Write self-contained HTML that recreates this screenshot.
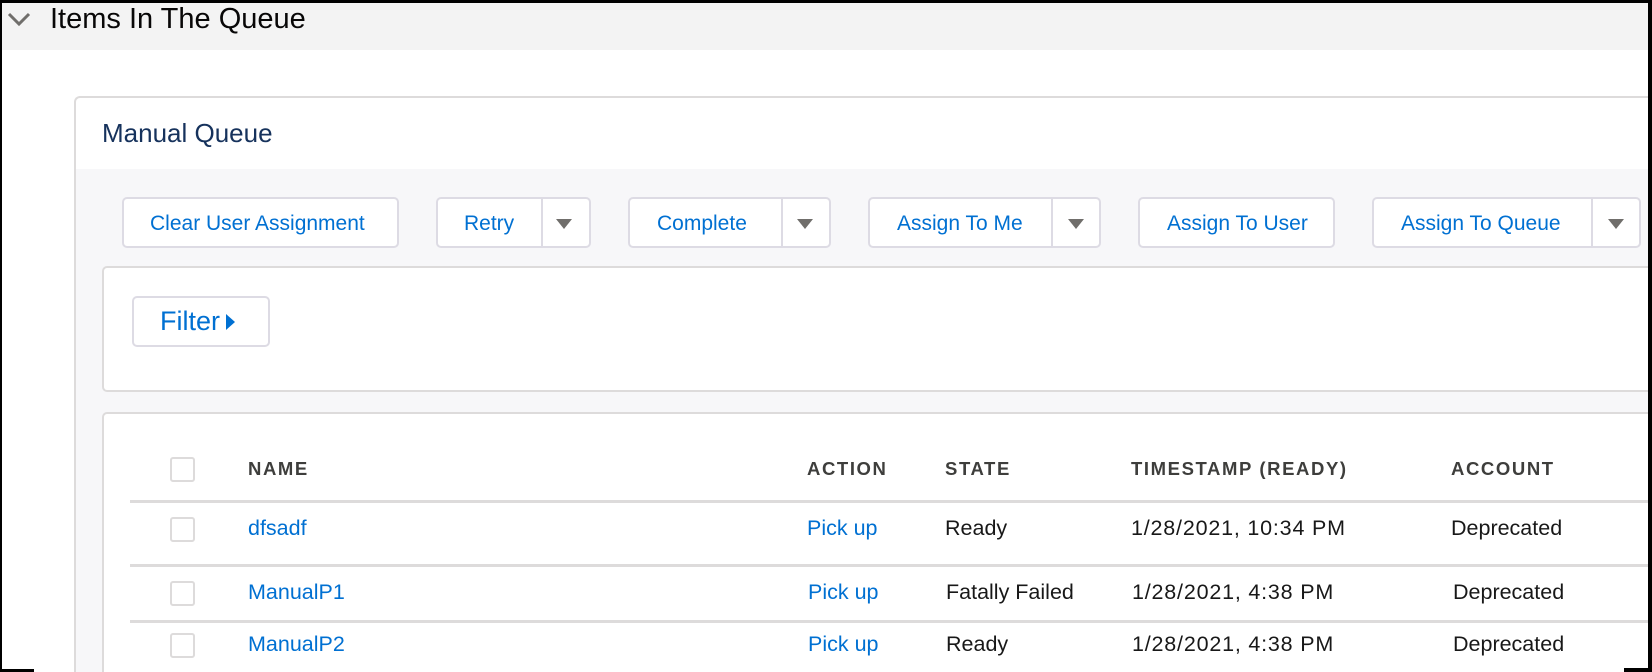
<!DOCTYPE html>
<html><head><meta charset="utf-8"><style>
*{box-sizing:border-box;margin:0;padding:0}
html,body{width:1652px;height:672px;overflow:hidden}
body{background:#fff;position:relative;font-family:"Liberation Sans",sans-serif}
.a{position:absolute}
.hdr{left:0;top:0;width:1652px;height:50px;background:#f3f3f3}
.t{position:absolute;white-space:nowrap;line-height:1}
.btn{position:absolute;top:197px;height:51px;border:2px solid #dddbe4;border-radius:5px;background:#fff;color:#0070d2;font-size:21px}
.btn span{position:absolute;top:13px;white-space:nowrap}
.sp{position:absolute;top:0;bottom:0;border-left:2px solid #dddbe4}
.tri{position:absolute;top:20px;width:0;height:0;border-left:8px solid transparent;border-right:8px solid transparent;border-top:10px solid #706e6b}
.th{font-size:18.5px;font-weight:bold;color:#3e3e3c;letter-spacing:1.6px}
.td{font-size:21.5px;color:#181818}
.ts{letter-spacing:0.8px}
.lk{font-size:21.5px;color:#0070d2}
.cb{position:absolute;left:170px;width:25px;height:25px;border:2px solid #dddbdb;border-radius:3px;background:#fff}
.ln{position:absolute;left:130px;width:1518px;height:3px;background:#dddbdb}
.blk{position:absolute;background:#000;z-index:10}
</style></head><body>
<div class="a hdr"></div>
<div class="blk" style="left:0;top:0;width:1652px;height:3px"></div>
<div class="blk" style="left:0;top:0;width:2px;height:672px"></div>
<div class="blk" style="left:1648px;top:0;width:4px;height:672px"></div>
<div class="blk" style="left:0;top:669px;width:34px;height:3px"></div>
<div class="blk" style="left:1624px;top:668px;width:28px;height:4px"></div>
<svg class="a" style="left:6px;top:10px" width="26" height="18"><path d="M3 4 L13 14 L23 4" stroke="#706e6b" stroke-width="3" fill="none"/></svg>
<div class="t" style="left:50px;top:5px;font-size:29px;color:#080707">Items In The Queue</div>

<div class="a" style="left:74px;top:96px;width:1574px;height:576px;border:2px solid #dddbdb;border-bottom:none;border-right:none;border-radius:6px 0 0 0;background:#fff"></div>
<div class="a" style="left:76px;top:169px;width:1572px;height:503px;background:#f7f7f9"></div>
<div class="t" style="left:102px;top:120px;font-size:26px;color:#16325c">Manual Queue</div>

<div class="btn" style="left:122px;width:277px"><span style="left:26px">Clear User Assignment</span></div>
<div class="btn" style="left:436px;width:155px"><span style="left:26px">Retry</span><div class="sp" style="left:103px"></div><div class="tri" style="left:118px"></div></div>
<div class="btn" style="left:628px;width:203px"><span style="left:27px">Complete</span><div class="sp" style="left:151px"></div><div class="tri" style="left:167px"></div></div>
<div class="btn" style="left:868px;width:233px"><span style="left:27px">Assign To Me</span><div class="sp" style="left:181px"></div><div class="tri" style="left:198px"></div></div>
<div class="btn" style="left:1138px;width:197px"><span style="left:27px">Assign To User</span></div>
<div class="btn" style="left:1372px;width:269px"><span style="left:27px">Assign To Queue</span><div class="sp" style="left:217px"></div><div class="tri" style="left:234px"></div></div>

<div class="a" style="left:102px;top:266px;width:1546px;height:126px;border:2px solid #dddbdb;border-right:none;border-radius:5px 0 0 5px;background:#fff"></div>
<div class="a" style="left:132px;top:296px;width:138px;height:51px;border:2px solid #dddbe4;border-radius:5px;background:#fff"></div>
<div class="t" style="left:160px;top:308px;font-size:27px;color:#0070d2">Filter</div>
<div class="a" style="left:226px;top:314px;width:0;height:0;border-top:8px solid transparent;border-bottom:8px solid transparent;border-left:9px solid #0070d2"></div>

<div class="a" style="left:102px;top:412px;width:1546px;height:260px;border:2px solid #dddbdb;border-right:none;border-bottom:none;border-radius:5px 0 0 0;background:#fff"></div>
<div class="cb" style="top:457px"></div>
<div class="t th" style="left:248px;top:460px">NAME</div>
<div class="t th" style="left:807px;top:460px">ACTION</div>
<div class="t th" style="left:945px;top:460px">STATE</div>
<div class="t th" style="left:1131px;top:460px">TIMESTAMP (READY)</div>
<div class="t th" style="left:1451px;top:460px">ACCOUNT</div>
<div class="ln" style="top:500px"></div>

<div class="cb" style="top:517px"></div>
<div class="t lk" style="left:248px;top:518px">dfsadf</div>
<div class="t lk" style="left:807px;top:518px">Pick up</div>
<div class="t td" style="left:945px;top:518px">Ready</div>
<div class="t td ts" style="left:1131px;top:518px">1/28/2021, 10:34 PM</div>
<div class="t td" style="left:1451px;top:518px">Deprecated</div>
<div class="ln" style="top:564px"></div>

<div class="cb" style="top:581px"></div>
<div class="t lk" style="left:248px;top:582px">ManualP1</div>
<div class="t lk" style="left:808px;top:582px">Pick up</div>
<div class="t td" style="left:946px;top:582px">Fatally Failed</div>
<div class="t td ts" style="left:1132px;top:582px">1/28/2021, 4:38 PM</div>
<div class="t td" style="left:1453px;top:582px">Deprecated</div>
<div class="ln" style="top:620px"></div>

<div class="cb" style="top:633px"></div>
<div class="t lk" style="left:248px;top:634px">ManualP2</div>
<div class="t lk" style="left:808px;top:634px">Pick up</div>
<div class="t td" style="left:946px;top:634px">Ready</div>
<div class="t td ts" style="left:1132px;top:634px">1/28/2021, 4:38 PM</div>
<div class="t td" style="left:1453px;top:634px">Deprecated</div>
</body></html>
